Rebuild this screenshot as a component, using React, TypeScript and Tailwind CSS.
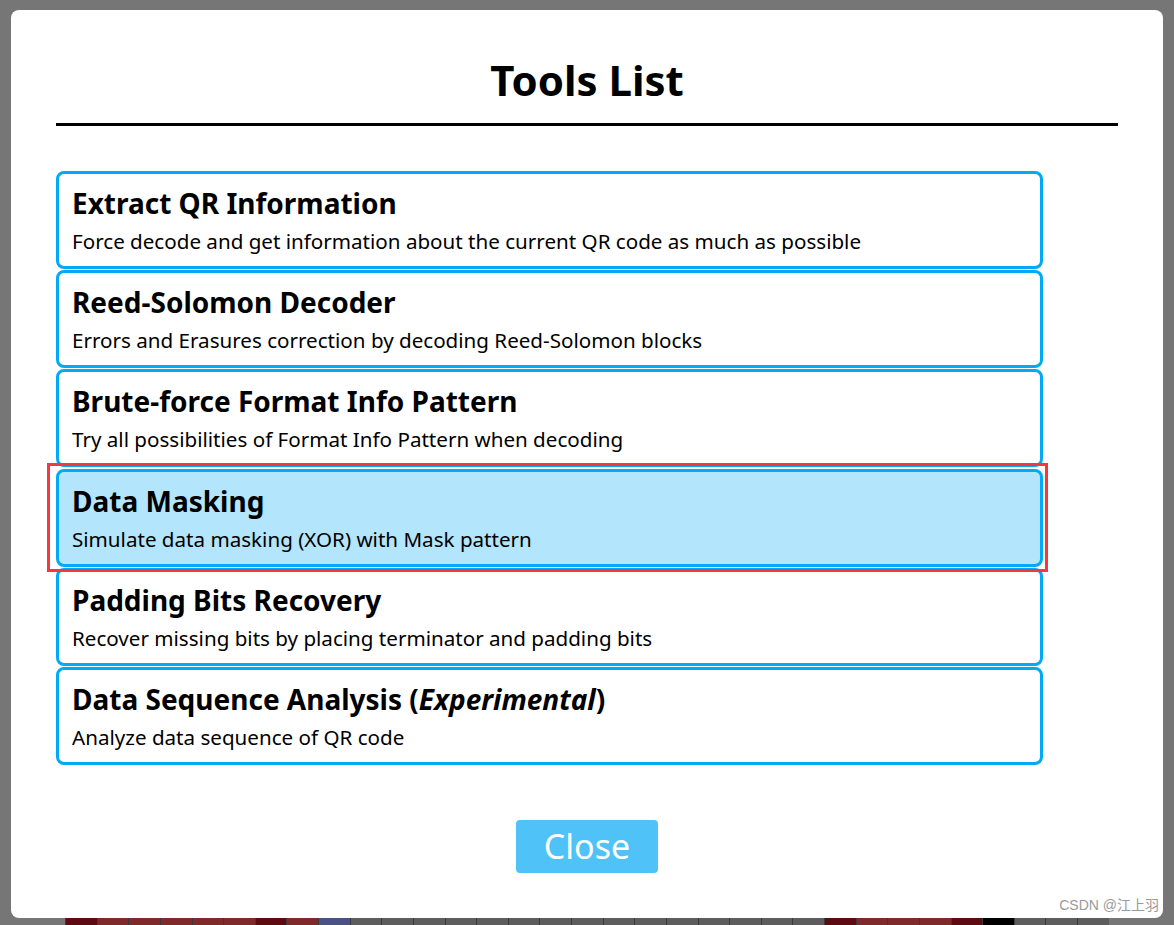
import React from 'react';

interface Tool {
    title: React.ReactNode;
    description: string;
    active?: boolean;
}

const tools: Tool[] = [
    {
        title: 'Extract QR Information',
        description: 'Force decode and get information about the current QR code as much as possible'
    },
    {
        title: 'Reed-Solomon Decoder',
        description: 'Errors and Erasures correction by decoding Reed-Solomon blocks'
    },
    {
        title: 'Brute-force Format Info Pattern',
        description: 'Try all possibilities of Format Info Pattern when decoding'
    },
    {
        title: 'Data Masking',
        description: 'Simulate data masking (XOR) with Mask pattern',
        active: true
    },
    {
        title: 'Padding Bits Recovery',
        description: 'Recover missing bits by placing terminator and padding bits'
    },
    {
        title: (
            <>
                Data Sequence Analysis (<i>Experimental</i>)
            </>
        ),
        description: 'Analyze data sequence of QR code'
    }
];

// cells of the page that peek out under the modal
const strip: string[] = [
    'bg-[#5c0c10]', 'bg-[#7f2a2a]', 'bg-[#7f2a2a]', 'bg-[#7f2a2a]', 'bg-[#7f2a2a]', 'bg-[#7f2a2a]',
    'bg-[#5c0c10]', 'bg-[#7f2a2a]', 'bg-[#4a5283]',
    'bg-[#5d5d5d]', 'bg-[#5d5d5d]', 'bg-[#5d5d5d]', 'bg-[#5d5d5d]', 'bg-[#5d5d5d]',
    'bg-[#5d5d5d]', 'bg-[#5d5d5d]', 'bg-[#5d5d5d]', 'bg-[#5d5d5d]', 'bg-[#5d5d5d]',
    'bg-[#5d5d5d]', 'bg-[#5d5d5d]', 'bg-[#5d5d5d]', 'bg-[#5d5d5d]', 'bg-[#5d5d5d]',
    'bg-[#5c0c10]', 'bg-[#7f2a2a]', 'bg-[#7f2a2a]', 'bg-[#7f2a2a]', 'bg-[#5c0c10]', 'bg-black',
    'bg-[#5d5d5d]', 'bg-[#5d5d5d]', 'bg-[#5d5d5d]'
];

const ToolCard: React.FC<{ tool: Tool }> = ({ tool }) => {
    const card = (
        <div
            className={`h-[98px] rounded-[8px] border-[3px] border-[#03a9f4] px-[13px] pt-[10px] ${
                tool.active ? 'bg-[#b3e5fc]' : 'bg-white'
            }`}
        >
            <div className="text-[28px] font-bold leading-[38px] text-black">{tool.title}</div>
            <div className="mt-[5px] text-[20.6px] leading-[28px] text-black">{tool.description}</div>
        </div>
    );

    if (!tool.active) return card;

    return (
        <div className="relative">
            {card}
            <span className="pointer-events-none absolute -left-[9px] -top-[6px] -right-[5px] -bottom-[5px] border-[3px] border-[#f23a3a]" />
        </div>
    );
};

export default function App() {
    return (
        <div className="relative h-[925px] w-[1174px] overflow-hidden bg-[#767677] pt-[10px] font-['Noto_Sans',sans-serif]">
            <div className="relative z-10 mx-[11px] flex h-[908px] flex-col rounded-[8px] bg-white px-[45px] pt-[40px]">
                <h2 className="text-center text-[42px] font-bold leading-[60px] text-black">Tools List</h2>
                <div className="mt-[13px] h-[3px] bg-black" />

                <div className="mt-[45px] flex w-[987px] flex-col gap-[1.2px]">
                    {tools.map((tool, i) => (
                        <ToolCard key={i} tool={tool} />
                    ))}
                </div>

                <div className="mt-[55px] flex justify-center">
                    <button className="h-[53px] w-[142px] rounded-[4px] bg-[#4fc3f7] text-[34px] leading-none text-white">
                        Close
                    </button>
                </div>

                <span className="absolute bottom-[2px] right-[4px] font-['Liberation_Sans','Noto_Sans_CJK_SC',sans-serif] text-[14px] text-[#9a9a9a]">
                    CSDN @江上羽
                </span>
            </div>

            <div className="ml-[65px] flex h-[7px]">
                {strip.map((c, i) => (
                    <div key={i} className={`h-full w-[31.64px] border-l border-[#3a3a3a] ${c}`} />
                ))}
            </div>
        </div>
    );
}
